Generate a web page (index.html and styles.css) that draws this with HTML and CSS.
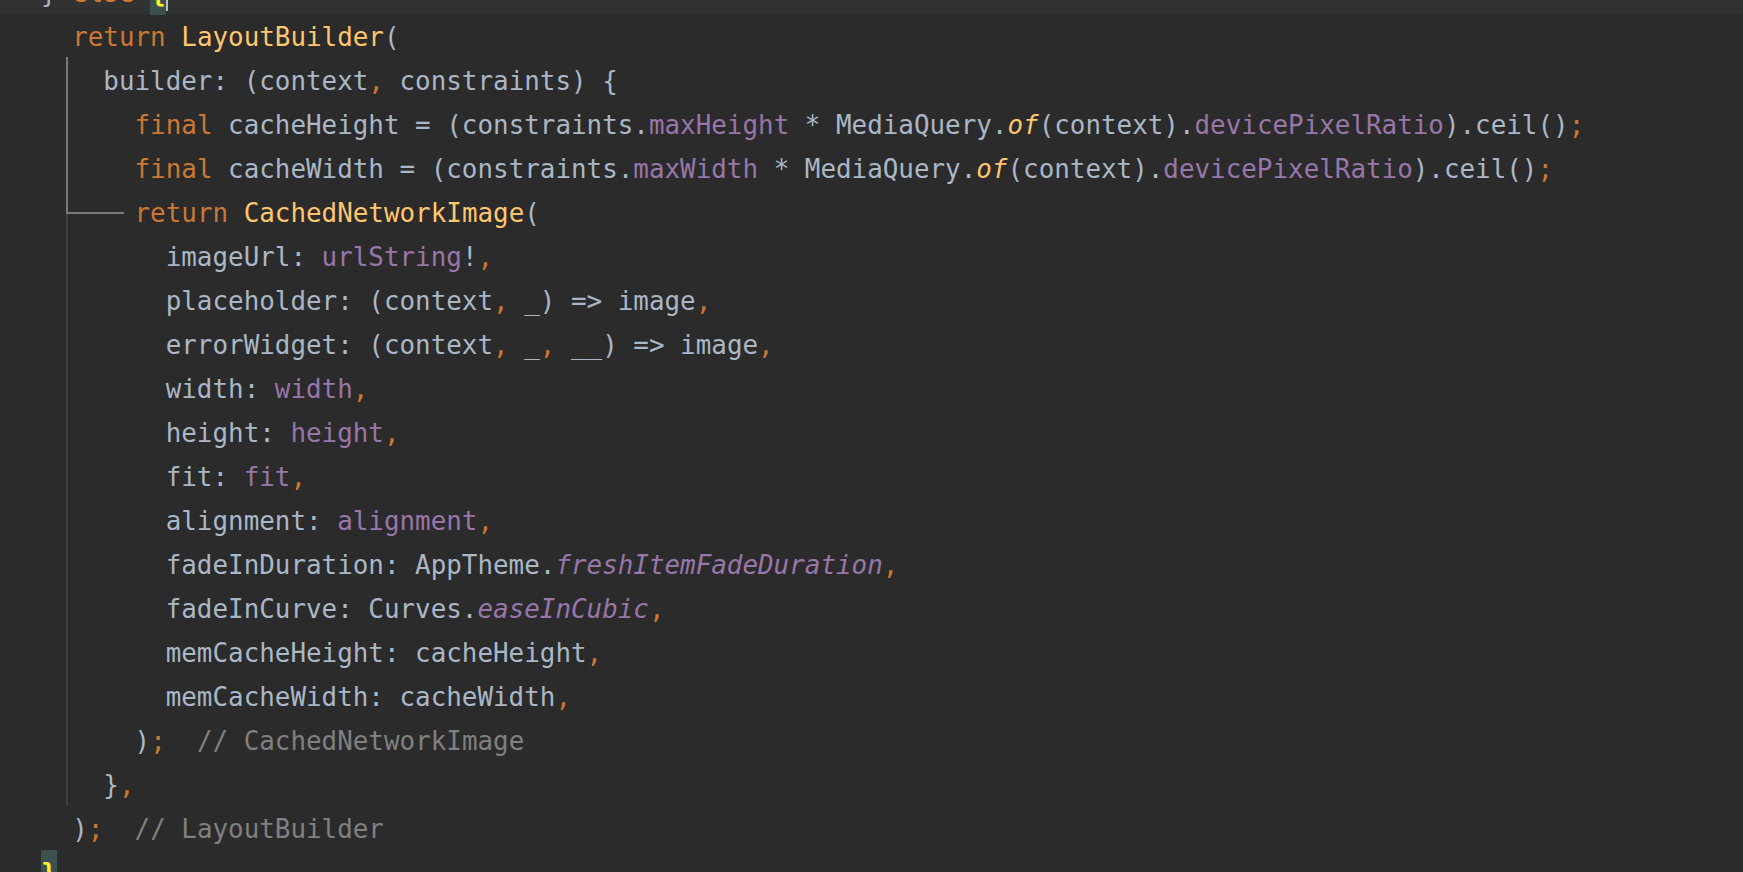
FILE: index.html
```html
<!DOCTYPE html>
<html lang="en">
<head>
<meta charset="utf-8">
<title>Editor</title>
<link rel="stylesheet" href="styles.css">
</head>
<body>
<div class="page">
  <div class="code">
    <div class="line current">}<span class="kw"> else </span><span class="brace">{</span><span class="caret"></span></div>
    <div class="line">  <span class="kw">return </span><span class="fn">LayoutBuilder</span>(</div>
    <div class="line">    builder: (context<span class="kw">,</span> constraints) {</div>
    <div class="line">      <span class="kw">final </span>cacheHeight = (constraints.<span class="pr">maxHeight</span> * MediaQuery.<span class="fn it">of</span>(context).<span class="pr">devicePixelRatio</span>).ceil()<span class="kw">;</span></div>
    <div class="line">      <span class="kw">final </span>cacheWidth = (constraints.<span class="pr">maxWidth</span> * MediaQuery.<span class="fn it">of</span>(context).<span class="pr">devicePixelRatio</span>).ceil()<span class="kw">;</span></div>
    <div class="line">      <span class="kw">return </span><span class="fn">CachedNetworkImage</span>(</div>
    <div class="line">        imageUrl: <span class="pr">urlString</span>!<span class="kw">,</span></div>
    <div class="line">        placeholder: (context<span class="kw">,</span> _) =&gt; image<span class="kw">,</span></div>
    <div class="line">        errorWidget: (context<span class="kw">,</span> _<span class="kw">,</span> __) =&gt; image<span class="kw">,</span></div>
    <div class="line">        width: <span class="pr">width</span><span class="kw">,</span></div>
    <div class="line">        height: <span class="pr">height</span><span class="kw">,</span></div>
    <div class="line">        fit: <span class="pr">fit</span><span class="kw">,</span></div>
    <div class="line">        alignment: <span class="pr">alignment</span><span class="kw">,</span></div>
    <div class="line">        fadeInDuration: AppTheme.<span class="pr it">freshItemFadeDuration</span><span class="kw">,</span></div>
    <div class="line">        fadeInCurve: Curves.<span class="pr it">easeInCubic</span><span class="kw">,</span></div>
    <div class="line">        memCacheHeight: cacheHeight<span class="kw">,</span></div>
    <div class="line">        memCacheWidth: cacheWidth<span class="kw">,</span></div>
    <div class="line">      )<span class="kw">;</span>  <span class="cm">// CachedNetworkImage</span></div>
    <div class="line">    }<span class="kw">,</span></div>
    <div class="line">  )<span class="kw">;</span>  <span class="cm">// LayoutBuilder</span></div>
    <div class="line"><span class="brace">}</span></div>
  </div>
  <div class="guide guide-active"></div>
  <div class="guide guide-dim"></div>
  <div class="guide-branch"></div>
</div>
</body>
</html>
```

FILE: styles.css
```css
html, body {
  margin: 0;
  padding: 0;
  background: #2b2b2b;
  overflow: hidden;
}

.page {
  position: relative;
  width: 1743px;
  height: 872px;
  overflow: hidden;
  background: #2b2b2b;
}

.code {
  margin-top: -30px;
  font-family: "DejaVu Sans Mono", "Liberation Mono", monospace;
  font-size: 25.9px;
  color: #a9b7c6;
}

.line {
  height: 44px;
  line-height: 44px;
  padding-left: 41px;
  white-space: pre;
  box-sizing: border-box;
  padding-top: 1px;
}

.line.current {
  background: #323232;
}

.kw { color: #cc7832; }
.fn { color: #ffc66d; }
.pr { color: #9876aa; }
.it { font-style: italic; }
.cm { color: #808080; }

.brace {
  display: inline-block;
  vertical-align: top;
  height: 44px;
  margin-top: -1px;
  padding-top: 1px;
  background: #3b514d;
  color: #ffef28;
  font-weight: bold;
}

.caret {
  display: inline-block;
  vertical-align: top;
  width: 2px;
  height: 40px;
  background: #bbbbbb;
}

.guide {
  position: absolute;
  left: 66px;
  width: 2px;
}

.guide-active {
  top: 57px;
  height: 157px;
  background: #7a7a7a;
}

.guide-dim {
  top: 214px;
  height: 592px;
  background: #3f3f3f;
}

.guide-branch {
  position: absolute;
  left: 66px;
  top: 212px;
  width: 58px;
  height: 2px;
  background: #7a7a7a;
}
```
